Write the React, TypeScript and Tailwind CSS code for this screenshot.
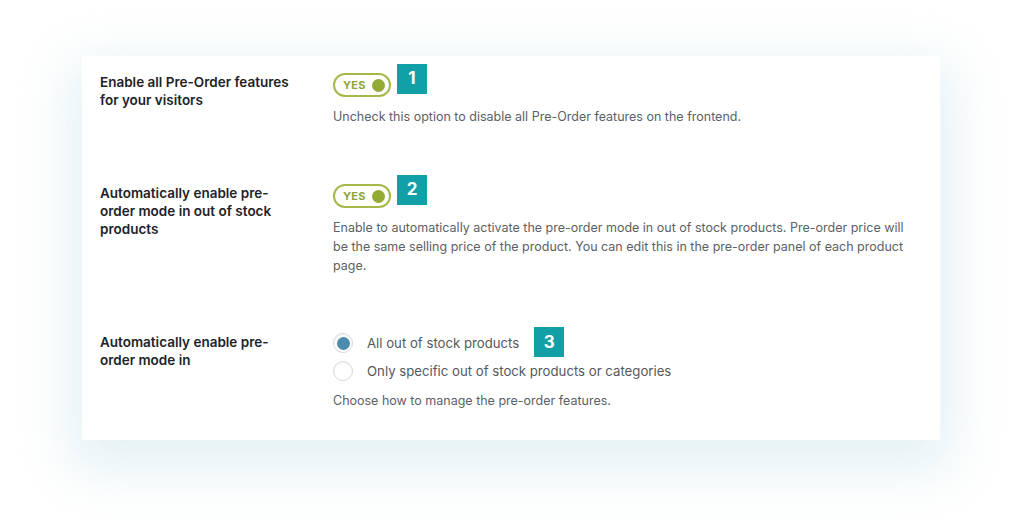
import React from 'react';

function Badge({ n, className }: { n: number; className: string }) {
  return (
    <span
      className={`absolute flex h-[30px] w-[30px] items-center justify-center bg-[#12a0a7] text-[17px] font-bold text-white ${className}`}
    >
      {n}
    </span>
  );
}

function Toggle({ badge }: { badge: number }) {
  return (
    <div className="relative h-[24px] w-[58px]">
      <div className="flex h-[24px] w-[58px] items-center justify-between rounded-full border-2 border-[#a3b94a] bg-white pl-[8px] pr-[4px]">
        <span className="text-[11px] font-bold leading-none tracking-[0.02em] text-[#8ea536]">YES</span>
        <span className="h-[13px] w-[13px] rounded-full bg-[#93aa35]" />
      </div>
      <Badge n={badge} className="left-[64px] top-[-9px]" />
    </div>
  );
}

function Radio({ checked, label, badge }: { checked?: boolean; label: string; badge?: number }) {
  return (
    <label className="flex h-[20px] items-center gap-[14px]">
      <span className="flex h-[20px] w-[20px] items-center justify-center rounded-full border border-[#d6d8db] bg-white shadow-[inset_0_1px_2px_rgba(0,0,0,0.06)]">
        {checked && <span className="h-[13px] w-[13px] rounded-full bg-[#4b8bad]" />}
      </span>
      <span className="relative text-[13.2px] leading-[20px] text-[#55595f]">
        {label}
        {badge && <Badge n={badge} className="left-[calc(100%+15px)] top-[-6px]" />}
      </span>
    </label>
  );
}

function Row({ label, children, className = '' }: { label: string; children: React.ReactNode; className?: string }) {
  return (
    <div className={`flex ${className}`}>
      <div className="w-[233px] shrink-0 pr-[33px] text-[13.5px] font-semibold leading-[18px] text-[#1d2327]">
        {label}
      </div>
      <div className="w-[575px]">{children}</div>
    </div>
  );
}

export default function App() {
  return (
    <div
      className="h-[530px] w-[1024px] overflow-hidden bg-white pl-[82px] pt-[56px]"
      style={{ fontFamily: 'Inter, "Noto Sans", sans-serif' }}
    >
      <div className="h-[384px] w-[858px] bg-white pl-[18px] pt-[17px] shadow-[0_18px_50px_12px_rgba(170,212,220,0.32)]">
        <Row label="Enable all Pre-Order features for your visitors">
          <Toggle badge={1} />
          <p className="mt-[10px] text-[12.5px] leading-[19px] text-[#5c5f66]">
            Uncheck this option to disable all Pre-Order features on the frontend.
          </p>
        </Row>

        <Row label="Automatically enable pre-order mode in out of stock products" className="mt-[58px]">
          <Toggle badge={2} />
          <p className="mt-[10px] text-[12.5px] leading-[19px] text-[#5c5f66]">
            Enable to automatically activate the pre-order mode in out of stock products. Pre-order price will
            be the same selling price of the product. You can edit this in the pre-order panel of each product
            page.
          </p>
        </Row>

        <Row label="Automatically enable pre-order mode in" className="mt-[58px]">
          <div className="flex flex-col gap-[8px]">
            <Radio checked label="All out of stock products" badge={3} />
            <Radio label="Only specific out of stock products or categories" />
          </div>
          <p className="mt-[10px] text-[12.5px] leading-[19px] text-[#5c5f66]">
            Choose how to manage the pre-order features.
          </p>
        </Row>
      </div>
    </div>
  );
}
